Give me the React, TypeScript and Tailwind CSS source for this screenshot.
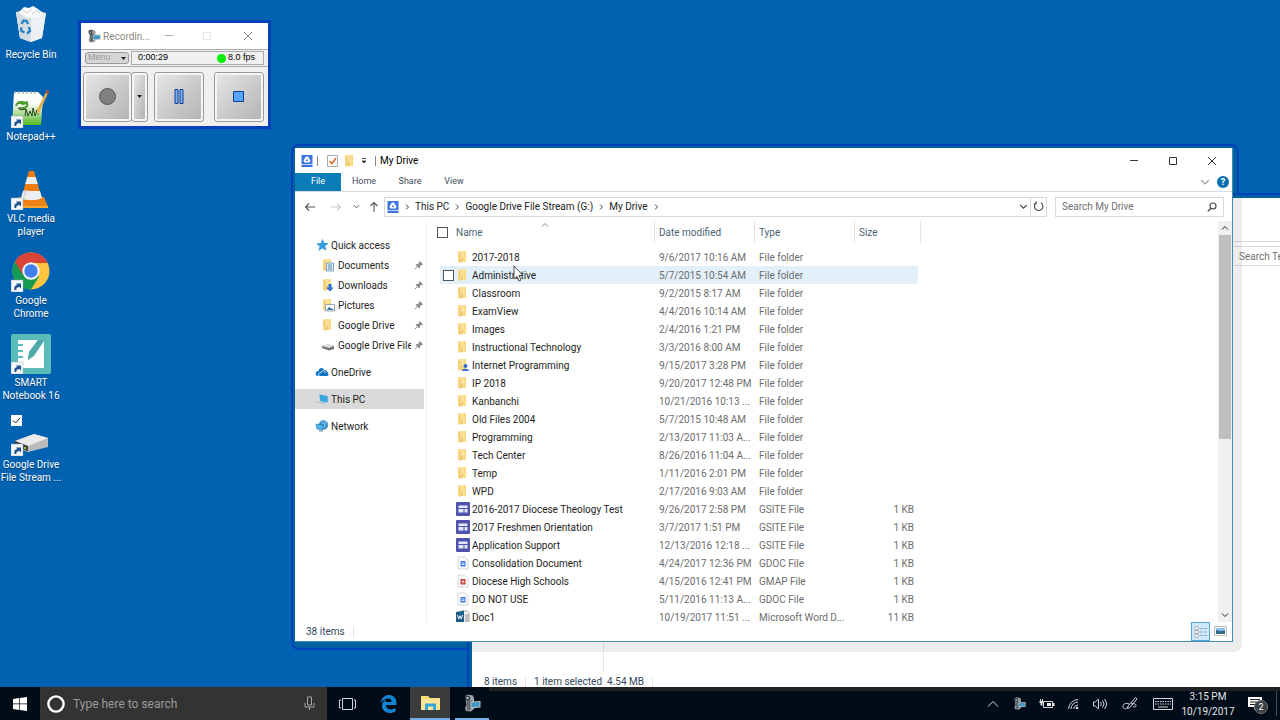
import type { ReactNode } from 'react'

type IconKind = 'folder' | 'shared' | 'site' | 'doc' | 'map' | 'word'

interface FileRow {
  name: string
  date: string
  type: string
  size?: string
  icon: IconKind
}

const FILES: FileRow[] = [
  { name: '2017-2018', date: '9/6/2017 10:16 AM', type: 'File folder', icon: 'folder' },
  { name: 'Administrative', date: '5/7/2015 10:54 AM', type: 'File folder', icon: 'folder' },
  { name: 'Classroom', date: '9/2/2015 8:17 AM', type: 'File folder', icon: 'folder' },
  { name: 'ExamView', date: '4/4/2016 10:14 AM', type: 'File folder', icon: 'folder' },
  { name: 'Images', date: '2/4/2016 1:21 PM', type: 'File folder', icon: 'folder' },
  { name: 'Instructional Technology', date: '3/3/2016 8:00 AM', type: 'File folder', icon: 'folder' },
  { name: 'Internet Programming', date: '9/15/2017 3:28 PM', type: 'File folder', icon: 'shared' },
  { name: 'IP 2018', date: '9/20/2017 12:48 PM', type: 'File folder', icon: 'folder' },
  { name: 'Kanbanchi', date: '10/21/2016 10:13 ...', type: 'File folder', icon: 'folder' },
  { name: 'Old Files 2004', date: '5/7/2015 10:48 AM', type: 'File folder', icon: 'folder' },
  { name: 'Programming', date: '2/13/2017 11:03 A...', type: 'File folder', icon: 'folder' },
  { name: 'Tech Center', date: '8/26/2016 11:04 A...', type: 'File folder', icon: 'folder' },
  { name: 'Temp', date: '1/11/2016 2:01 PM', type: 'File folder', icon: 'folder' },
  { name: 'WPD', date: '2/17/2016 9:03 AM', type: 'File folder', icon: 'folder' },
  { name: '2016-2017 Diocese Theology Test', date: '9/26/2017 2:58 PM', type: 'GSITE File', size: '1 KB', icon: 'site' },
  { name: '2017 Freshmen Orientation', date: '3/7/2017 1:51 PM', type: 'GSITE File', size: '1 KB', icon: 'site' },
  { name: 'Application Support', date: '12/13/2016 12:18 ...', type: 'GSITE File', size: '1 KB', icon: 'site' },
  { name: 'Consolidation Document', date: '4/24/2017 12:36 PM', type: 'GDOC File', size: '1 KB', icon: 'doc' },
  { name: 'Diocese High Schools', date: '4/15/2016 12:41 PM', type: 'GMAP File', size: '1 KB', icon: 'map' },
  { name: 'DO NOT USE', date: '5/11/2016 11:13 A...', type: 'GDOC File', size: '1 KB', icon: 'doc' },
  { name: 'Doc1', date: '10/19/2017 11:51 ...', type: 'Microsoft Word D...', size: '11 KB', icon: 'word' },
]

/* ---------- icons ---------- */

function Folder({ children }: { children?: ReactNode }) {
  return (
    <svg width="14" height="14" viewBox="0 0 14 14" className="shrink-0">
      <path d="M2 1h6l2 1v10H2z" fill="#fbe09a" />
      <path d="M2 2l3 1v10l-3-1z" fill="#f6d27c" />
      <path d="M5 8h2v4H5z" fill="#f0c777" />
      <path d="M8.500 1h1.500v11H8.500z" fill="#fdd878" />
      {children}
    </svg>
  )
}

function FileIcon({ kind }: { kind: IconKind }) {
  if (kind === 'folder') return <Folder />
  if (kind === 'shared')
    return (
      <Folder>
        <circle cx="9.500" cy="8" r="2" fill="#2f6fd0" />
        <path d="M6 13c0-3 7-3 7 0z" fill="#2f6fd0" />
      </Folder>
    )
  if (kind === 'site')
    return (
      <svg width="14" height="14" viewBox="0 0 14 14" className="shrink-0">
        <rect width="14" height="14" rx="1" fill="#4e54ae" />
        <path d="M2.500 3.500h9V6h-9zM2.500 7h5v3.500h-5zM8.500 7h3v3.500h-3z" fill="#e6e8fb" />
      </svg>
    )
  if (kind === 'word')
    return (
      <svg width="14" height="14" viewBox="0 0 14 14" className="shrink-0">
        <path d="M6 1h5l3 3v9H6z" fill="#f2f2f2" stroke="#8a8a8a" strokeWidth=".7" />
        <path d="M9 5h4M9 7h4M9 9h4M9 11h4" stroke="#777" strokeWidth=".8" />
        <path d="M0 2l8-1.500v13L0 12z" fill="#1f5f87" />
        <path d="M1.500 5l1.200 4L4 5.800 5.200 9l1.300-4" stroke="#fff" fill="none" strokeWidth=".9" />
      </svg>
    )
  const color = kind === 'doc' ? '#3d7ae0' : '#c8372d'
  return (
    <svg width="14" height="14" viewBox="0 0 14 14" className="shrink-0">
      <path d="M2 1h6.500L12 4v9H2z" fill="#fbfbfb" stroke="#c4c8cc" strokeWidth=".7" />
      <rect x="4.500" y="5" width="5" height="5.500" rx=".5" fill={color} />
      <path d={kind === 'doc' ? 'M5.500 7h3M5.500 8.500h3' : 'M7 6v3.500M5.500 7.700h3'} stroke="#fff" strokeWidth=".8" />
    </svg>
  )
}

function DriveIcon() {
  return (
    <svg width="12" height="12" viewBox="0 0 12 12" className="shrink-0">
      <rect x=".5" width="11" height="9" fill="#3b74e0" />
      <path d="M5 1.500h2l2.600 4.300-1 1.700H3.400l-1-1.700z" fill="#fff" />
      <path d="M6 3.800L7.200 5.900H4.800z" fill="#3b74e0" />
      <rect x=".5" y="9.700" width="11" height="2.300" fill="#3b74e0" />
    </svg>
  )
}

function Chevron({ dir = 'right', size = 8, color = '#444' }: { dir?: 'right' | 'down' | 'up'; size?: number; color?: string }) {
  const d = dir === 'right' ? 'M3 1.500L5.500 4 3 6.500' : dir === 'down' ? 'M1 2.500L4 5.500l3-3' : 'M1 5.500l3-3 3 3'
  return (
    <svg width={size} height={size} viewBox="0 0 8 8" className="shrink-0">
      <path d={d} fill="none" stroke={color} strokeWidth="1" />
    </svg>
  )
}

function Arrow({ dir, color }: { dir: 'left' | 'right' | 'up'; color: string }) {
  const d = {
    left: 'M11 6H1.500M5 2.500L1.500 6 5 9.500',
    right: 'M1 6h9.500M7 2.500l3.500 3.500L7 9.500',
    up: 'M6 11V1.500M2.500 5L6 1.500 9.500 5',
  }[dir]
  return (
    <svg width="12" height="12" viewBox="0 0 12 12">
      <path d={d} fill="none" stroke={color} strokeWidth="1.100" />
    </svg>
  )
}

function Pin() {
  return (
    <svg width="10" height="10" viewBox="0 0 10 10" className="shrink-0">
      <path d="M5.500 .8l3.700 3.700-1 .4-.6-.2-1.600 1.600v1.600l-.8.600L1.600 4.900l.7-.9h1.500l1.600-1.600-.2-.8z" fill="#8b8f94" />
      <path d="M3.500 6.500L.8 9.200" stroke="#8b8f94" />
    </svg>
  )
}

function Camera({ size = 18 }: { size?: number }) {
  return (
    <svg width={size} height={size} viewBox="0 0 18 18" className="shrink-0">
      <path d="M2 2l3-1.500 5 1 1 2.500v11l-3 2.500-5-.5-1-3 1.500-3z" fill="#9aa0a5" />
      <path d="M4 6.500h5V14l-3 2.500-2-.5z" fill="#60676d" />
      <circle cx="4.500" cy="4" r="2.600" fill="#303438" />
      <circle cx="4.500" cy="4" r="1.200" fill="#a9c3d8" />
      <path d="M7.500 7.500l10-.5v6.500l-10 1z" fill="#b4c0c8" />
      <path d="M8.500 8.500l8-.4v4.400l-8 .8z" fill="#3f97c6" />
    </svg>
  )
}

function ShortcutArrow() {
  return (
    <>
      <rect x="0" y="28" width="12" height="12" fill="#f4f7fb" stroke="#9ab" strokeWidth=".5" />
      <path d="M3.500 38c-.8-3 .5-4.800 2.700-5.100L5 31.500h5v5L8.500 35C6.500 35 5 36 5.300 38z" fill="#21528f" />
    </>
  )
}

function Art({ children }: { children: ReactNode }) {
  return (
    <svg width="40" height="40" viewBox="0 0 40 40">
      {children}
    </svg>
  )
}

const DESKTOP: { label: string; art: ReactNode; checked?: boolean }[] = [
  {
    label: 'Recycle Bin',
    art: (
      <Art>
        <path d="M5 6l4 26 11 4 11-4 4-25-15-4z" fill="#dce3e8" />
        <path d="M5 6l15 5 15-4-4 25-11 4-11-4z" fill="#eef1f3" />
        <path d="M5 6l15 5v25L9 32z" fill="#d3dce2" />
        <path d="M8 6l5-5 5 1 4-2 5 3 5 4-5 4-12 1z" fill="#fafafa" />
        <path d="M12 4l4 3 5-4M21 8l5-4 3 4" stroke="#c5ccd1" fill="none" />
        <path d="M10.500 18l2-3.500 3 .5 1.500 3" stroke="#2583c9" strokeWidth="2.400" fill="none" />
        <path d="M18 21l1 4-3 2.500" stroke="#2583c9" strokeWidth="2.400" fill="none" />
        <path d="M13.500 26.500l-3-1.500-.5-3.500" stroke="#2583c9" strokeWidth="2.400" fill="none" />
      </Art>
    ),
  },
  {
    label: 'Notepad++',
    art: (
      <Art>
        <defs>
          <linearGradient id="npp" x1="0" y1="0" x2="0" y2="1">
            <stop offset="0.350" stopColor="#fbfdf8" />
            <stop offset="1" stopColor="#52b821" />
          </linearGradient>
        </defs>
        <path d="M3 4h24l5 5-2 28H1z" fill="url(#npp)" />
        <path d="M4 3v3M8 3v3M12 3v3M16 3v3M20 3v3M24 3v3" stroke="#8f989e" />
        <path d="M5 18c1-5 8-5 11-2 2 3-4 5-8 4M7 14l5 2 5-2" stroke="#4f9c2e" strokeWidth="2" fill="none" />
        <path d="M7 20l3 2 5-1" stroke="#25401f" fill="none" />
        <path d="M14 28l1-7 2 7 2-5 2 5 1-8 2 8 2-6 1 5" stroke="#2a4a25" fill="none" />
        <path d="M36 2l2 1-9 20-3 4 0-5z" fill="#e2b04a" />
        <path d="M36 2l2 1-1 3-2-1z" fill="#b23a2a" />
        <ShortcutArrow />
      </Art>
    ),
  },
  {
    label: 'VLC media player',
    art: (
      <Art>
        <path d="M8 27h25l4 10H3z" fill="#ec8414" />
        <path d="M3 36h34v2H3z" fill="#f8a82e" />
        <path d="M18 1h5l8 28c-4 4-17 4-21 0z" fill="#f07c12" />
        <path d="M16.300 7h8.400l2 7H14.200zM12 21h17l2 7c-5 3-17 3-21 0z" fill="#eceff1" />
        <path d="M14 20l-3 9 2 1 4-10z" fill="#d5d8da" opacity=".8" />
        <ShortcutArrow />
      </Art>
    ),
  },
  {
    label: 'Google Chrome',
    art: (
      <Art>
        <circle cx="20" cy="19" r="18.500" fill="#fdc53f" />
        <path d="M20 19L4 9.700A18.500 18.500 0 0 0 20 37.500l8-13z" fill="#159b52" />
        <path d="M20 11h16.700A18.500 18.500 0 0 0 4 9.700L12 23z" fill="#da4437" />
        <circle cx="20" cy="19" r="8.700" fill="#f3f6fa" />
        <circle cx="20" cy="19" r="6.700" fill="#4280ee" />
        <ShortcutArrow />
      </Art>
    ),
  },
  {
    label: 'SMART Notebook 16',
    art: (
      <Art>
        <rect width="40" height="40" rx="2" fill="#59bcba" />
        <path d="M7 6h20l-9 12-1 8 6-4L33 7v27H7z" fill="#fff" />
        <path d="M6 11h6M6 17h6M6 23h6" stroke="#59bcba" strokeWidth="2" />
        <path d="M27 6h6L22 22l-5 4 1-8z" fill="#4fa9a8" />
        <ShortcutArrow />
      </Art>
    ),
  },
  {
    label: 'Google Drive File Stream ...',
    checked: true,
    art: (
      <Art>
        <path d="M4 25l19-7 14 4v9l-20 5L4 31z" fill="#b9bbbd" />
        <path d="M4 25l19-7 14 4-20 8z" fill="#ececec" />
        <path d="M4 25l13 5v5L4 31z" fill="#3b3d3f" />
        <path d="M13 31h2v2h-2z" fill="#9acb3b" />
        <ShortcutArrow />
      </Art>
    ),
  },
]

function DesktopIcons() {
  return (
    <div className="absolute top-1.5 left-0 flex w-[62px] flex-col leading-[13px] text-white">
      {DESKTOP.map((item) => (
        <button key={item.label} className="relative flex h-[82px] flex-col items-center gap-0.5">
          {item.checked && (
            <svg width="11" height="11" viewBox="0 0 11 11" className="absolute -top-px left-[11px]">
              <rect width="11" height="11" fill="#fff" />
              <path d="M2 5.500L4.500 8 9 3" fill="none" stroke="#222" />
            </svg>
          )}
          {item.art}
          <span className="[text-shadow:0_1px_1px_#003a70]">{item.label}</span>
        </button>
      ))}
    </div>
  )
}

/* ---------- recorder ---------- */

function Recorder() {
  const key = 'flex h-12 items-center justify-center rounded-[3px] border-2 border-[#f5f5f5] bg-linear-to-br from-[#e6e6e6] to-[#b4b4b4] shadow-[0_0_0_1px_#999]'
  return (
    <section className="absolute top-[23px] left-[81px] flex w-[187px] flex-col bg-[#f0f0f0] shadow-[0_0_0_3px_#0040b8]">
      <header className="flex h-[26px] items-center bg-white pl-1.5 text-[#8d8d80]">
        <Camera size={14} />
        <span className="ml-0.5 w-[50px]">Recordin...</span>
        <button aria-label="Minimize" className="flex w-8 justify-center">
          <svg width="10" height="10"><path d="M1 4.500h8" stroke="#aaa" /></svg>
        </button>
        <button aria-label="Maximize" className="flex flex-1 justify-center">
          <svg width="10" height="10"><path d="M1.500 1.500h7v7h-7z" stroke="#e4e4e4" fill="none" /></svg>
        </button>
        <button aria-label="Close" className="flex w-10 justify-center">
          <svg width="10" height="10"><path d="M1 1l8 8M9 1L1 9" stroke="#888" /></svg>
        </button>
      </header>
      <div className="flex h-[18px] items-center gap-0.5 border-y border-[#aaa] px-1 font-['Liberation_Sans',sans-serif] text-[9px] text-black">
        <button className="flex h-3 w-11 items-center justify-between rounded-[3px] border border-[#999] bg-[#d6d6d6] px-0.5 text-[#999]">
          Menu
          <svg width="5" height="3"><path d="M0 0h5L2.500 3z" fill="#222" /></svg>
        </button>
        <div className="flex h-[14px] flex-1 items-center justify-between border border-[#aaa] pr-2 pl-1.5">
          <span>0:00:29</span>
          <span className="flex items-center gap-0.5">
            <i className="size-[9px] rounded-full bg-[#00f000]" />
            8.0 fps
          </span>
        </div>
      </div>
      <div className="flex h-[59px] items-center pl-[3px]">
        <button aria-label="Record" className={`${key} w-[47px]`}>
          <i className="size-[17px] rounded-full border border-[#555] bg-[#808080]" />
        </button>
        <button aria-label="Record options" className={`${key} ml-px w-[15px]`}>
          <svg width="5" height="3"><path d="M0 0h5L2.500 3z" fill="#222" /></svg>
        </button>
        <button aria-label="Pause" className={`${key} ml-2 w-12`}>
          <svg width="10" height="15"><path d="M1 .5h3v14H1zM6 .5h3v14H6z" fill="#72b2ff" stroke="#143c96" /></svg>
        </button>
        <button aria-label="Stop" className={`${key} ml-3 w-12`}>
          <svg width="12" height="12"><path d="M.5 .5h10v10H.5z" fill="#55a6ff" stroke="#143c96" /></svg>
        </button>
      </div>
    </section>
  )
}

/* ---------- explorer ---------- */

function TitleBar() {
  return (
    <header className="flex h-[25px] items-center pr-px pl-1.5 text-black">
      <DriveIcon />
      <i className="ml-1 h-2.5 w-px bg-[#888]" />
      <svg width="11" height="12" viewBox="0 0 11 12" className="ml-[9px]">
        <path d="M.5 .5h10v11H.5z" fill="#fff" stroke="#aaa" />
        <path d="M2.500 6L5 8.500 9 3" fill="none" stroke="#d9652b" strokeWidth="1.500" />
      </svg>
      <span className="ml-[5px]"><Folder /></span>
      <svg width="6" height="6" viewBox="0 0 6 6" className="ml-1"><path d="M1 .5h4M1 3h4L3 5z" stroke="#333" strokeWidth=".8" fill="#333" /></svg>
      <i className="ml-2 h-2.5 w-px bg-[#888]" />
      <h1 className="ml-1">My Drive</h1>
      <div className="ml-auto flex">
        <button aria-label="Minimize" className="flex w-[39px] justify-center"><svg width="10" height="10"><path d="M1 4.500h8" stroke="#333" /></svg></button>
        <button aria-label="Maximize" className="flex w-[39px] justify-center"><svg width="10" height="10"><path d="M1.500 1.500h7v7h-7z" fill="none" stroke="#333" /></svg></button>
        <button aria-label="Close" className="flex w-[39px] justify-center"><svg width="10" height="10"><path d="M1 1l8 8M9 1L1 9" stroke="#333" /></svg></button>
      </div>
    </header>
  )
}

function Ribbon() {
  return (
    <nav className="flex h-[19px] items-stretch border-b border-[#dadbdc] text-[9px] text-[#444b5c]">
      <button className="w-[46px] bg-[#0a7cb8] text-white">File</button>
      <button className="w-[46px]">Home</button>
      <button className="w-[46px]">Share</button>
      <button className="w-[42px]">View</button>
      <div className="ml-auto flex items-center gap-[7px] pr-[3px]">
        <Chevron dir="down" size={10} color="#999" />
        <button aria-label="Help" className="size-3 rounded-full bg-[#0a6fb0] text-[9px] leading-3 font-bold text-white">?</button>
      </div>
    </nav>
  )
}

function AddressRow() {
  return (
    <div className="flex h-[29px] items-center pr-2 pl-0.5">
      <button aria-label="Back" className="flex w-[26px] justify-center"><Arrow dir="left" color="#555" /></button>
      <button aria-label="Forward" className="flex w-[26px] justify-center"><Arrow dir="right" color="#ccc" /></button>
      <button aria-label="Recent locations" className="flex w-[14px] justify-center"><Chevron dir="down" size={7} /></button>
      <button aria-label="Up" className="flex w-[21px] justify-center"><Arrow dir="up" color="#555" /></button>
      <div className="flex h-5 flex-1 items-stretch border border-[#d9d9d9]">
        <div className="flex flex-1 items-center gap-1 pl-0.5 text-[#222]">
          <DriveIcon />
          <Chevron />
          <a href="#pc">This PC</a>
          <Chevron />
          <a href="#stream">Google Drive File Stream (G:)</a>
          <Chevron />
          <a href="#drive">My Drive</a>
          <Chevron />
        </div>
        <button aria-label="Previous locations" className="flex w-[14px] items-center justify-center"><Chevron dir="down" size={9} /></button>
        <button aria-label="Refresh" className="flex w-4 items-center justify-center border-l border-[#d9d9d9]">
          <svg width="11" height="11" viewBox="0 0 11 11"><path d="M8 1.800A4.200 4.200 0 1 1 3 2.100M3.200 .3v2.400H.8" fill="none" stroke="#444" strokeWidth="1.100" /></svg>
        </button>
      </div>
      <label className="ml-2 flex h-5 w-[169px] items-center border border-[#d9d9d9] px-1.5">
        <input aria-label="Search My Drive" placeholder="Search My Drive" className="min-w-0 flex-1 outline-none placeholder:text-[#707070]" />
        <svg width="10" height="10" viewBox="0 0 10 10"><circle cx="6" cy="4" r="3" fill="none" stroke="#444" strokeWidth="1.100" /><path d="M4 6.200L.8 9.400" stroke="#444" strokeWidth="1.300" /></svg>
      </label>
    </div>
  )
}

const PINNED: { label: string; icon: ReactNode }[] = [
  { label: 'Documents', icon: <Folder><path d="M5.500 5h7v8h-7z" fill="#e5f1fa" stroke="#5d8fb3" strokeWidth=".8" /><path d="M7 7h4M7 9h4M7 11h4" stroke="#4889b8" /></Folder> },
  { label: 'Downloads', icon: <Folder><path d="M7.500 6h3v3.500h2.300L9 13.500 5.200 9.500h2.300z" fill="#2673d3" /></Folder> },
  { label: 'Pictures', icon: <Folder><path d="M4.500 6.500h9v6.500h-9z" fill="#fff" stroke="#7f96a8" strokeWidth=".8" /><path d="M5.500 12l2.500-3 4.500 2.500v.5z" fill="#3d79a8" /></Folder> },
  { label: 'Google Drive', icon: <Folder /> },
  {
    label: 'Google Drive File Stream (G:)',
    icon: (
      <svg width="14" height="14" viewBox="0 0 14 14" className="shrink-0">
        <path d="M1 8l6-1.500 6 1.500v3l-5 1.500-7-2.500z" fill="#6f7275" />
        <path d="M1 8l6-1.500 6 1.500-5 2z" fill="#dedede" />
      </svg>
    ),
  },
]

function NavPane() {
  const top = 'flex h-5 items-center gap-0.5 pl-5 text-left'
  return (
    <aside className="flex w-[132px] shrink-0 flex-col gap-[7px] border-r border-[#eee] pt-3.5 pr-0.5 text-[#1e1e1e]">
      <div>
        <button className={top}>
          <svg width="14" height="14" viewBox="0 0 14 14"><path d="M7.500 1.500l1.500 3.800 4 .2-3.200 2.600 1 4-3.400-2.200-3.400 2.300 1-4L2 5.800l4-.3z" fill="#2fa0e4" stroke="#1b7fc4" strokeWidth=".6" /></svg>
          Quick access
        </button>
        {PINNED.map((p) => (
          <button key={p.label} className="flex h-5 w-full items-center gap-[3px] pl-[26px] text-left">
            {p.icon}
            <span className="flex-1 overflow-hidden whitespace-nowrap">{p.label}</span>
            <Pin />
          </button>
        ))}
      </div>
      <button className={top}>
        <svg width="14" height="14" viewBox="0 0 14 14"><path d="M1 10c-1-3 1-4 2.500-4C4 2.500 8 2 9 5c2.500-.5 3 1 3 2 2 .5 2 4 0 4H2.500z" fill="#1275c4" /><path d="M4 11c-1-2 0-3.500 2-3.500C7 5 10 5.500 10.300 7.700" fill="none" stroke="#fff" strokeWidth=".8" /></svg>
        OneDrive
      </button>
      <button className={`${top} bg-[#d9d9d9]`}>
        <svg width="14" height="14" viewBox="0 0 14 14"><path d="M4 2l9 2v7L5 9.500z" fill="#38a4e0" stroke="#c5d9e6" strokeWidth=".7" /><path d="M1 11l4-1 5 2" stroke="#b5bcc2" fill="none" /></svg>
        This PC
      </button>
      <button className={top}>
        <svg width="14" height="14" viewBox="0 0 14 14"><circle cx="8.500" cy="6" r="4.700" fill="#358dca" /><path d="M6 3l4 2-1 4M9 1.500l3 4" stroke="#9ad0f0" fill="none" /><path d="M1 5l7 1v5l-6-1z" fill="#4bb5e8" stroke="#1c6ea6" strokeWidth=".6" /><path d="M4 12h4" stroke="#6b8ba0" /></svg>
        Network
      </button>
    </aside>
  )
}

function FileTable() {
  const box = 'size-[11px] shrink-0 appearance-none border border-[#555] bg-white checked:bg-[#0a7cb8]'
  const th = 'pb-[5px] text-left font-normal align-top'
  const head = 'flex h-[22px] items-center border-r border-[#e2e2e2] pl-1'
  return (
    <table className="ml-[9px] w-[485px] table-fixed border-collapse text-[#6d6d6d]">
      <colgroup>
        <col className="w-[219px]" />
        <col className="w-[100px]" />
        <col className="w-[100px]" />
        <col className="w-[66px]" />
      </colgroup>
      <thead className="text-[#4c6372]">
        <tr>
          <th className={th}>
            <div className="relative flex h-[22px] items-center gap-2 border-r border-[#e2e2e2] pl-px">
              <input type="checkbox" aria-label="Select all" className={box} />
              Name
              <span className="absolute top-0 left-[105px] flex"><Chevron dir="up" color="#888" /></span>
            </div>
          </th>
          <th className={th}><div className={head}>Date modified</div></th>
          <th className={th}><div className={head}>Type</div></th>
          <th className={th}><div className={head}>Size</div></th>
        </tr>
      </thead>
      <tbody>
        {FILES.map((f, i) => {
          const bg = i === 1 ? 'bg-[#e3f0fa]' : ''
          return (
            <tr key={f.name}>
              <td className="p-0 pl-1">
                <div className={`flex h-[18px] items-center gap-0.5 pl-[3px] text-[#1e1e1e] ${bg}`}>
                  <input type="checkbox" aria-label={`Select ${f.name}`} className={`${box} ${i === 1 ? '' : 'opacity-0'}`} />
                  <FileIcon kind={f.icon} />
                  <span className="whitespace-nowrap">{f.name}</span>
                </div>
              </td>
              <td className="p-0"><div className={`flex h-[18px] items-center pl-1 whitespace-nowrap ${bg}`}>{f.date}</div></td>
              <td className="p-0"><div className={`flex h-[18px] items-center pl-1 whitespace-nowrap ${bg}`}>{f.type}</div></td>
              <td className="p-0 pr-[3px]"><div className={`flex h-[18px] items-center justify-end pr-1 ${bg}`}>{f.size}</div></td>
            </tr>
          )
        })}
      </tbody>
    </table>
  )
}

function Explorer() {
  return (
    <main className="absolute top-[148px] right-[47px] bottom-[78px] left-[295px] flex flex-col border-r border-b border-[#3f8db8] bg-white">
      <TitleBar />
      <Ribbon />
      <AddressRow />
      <div className="flex min-h-0 flex-1">
        <NavPane />
        <div className="min-w-0 flex-1 overflow-hidden">
          <FileTable />
        </div>
        <div className="flex w-[14px] flex-col items-center bg-[#f0f0f0]">
          <button aria-label="Scroll up" className="flex h-3.5 items-center"><Chevron dir="up" color="#222" /></button>
          <i className="h-[204px] w-3 bg-[#bfbfbf]" />
          <button aria-label="Scroll down" className="mt-auto flex h-3.5 items-center"><Chevron dir="down" color="#222" /></button>
        </div>
      </div>
      <footer className="flex h-[19px] items-center pl-[11px] text-[#33475b]">
        <span className="border-r border-[#e5e5e5] pr-2 leading-3">38 items</span>
        <button aria-label="Details view" className="ml-auto flex h-[19px] w-[19px] items-center justify-center border border-[#5aa5d8] bg-[#cce8ff]">
          <svg width="13" height="12" viewBox="0 0 13 12"><path d="M1 .5h3v3H1zM1 4.500h3v3H1zM1 8.500h3v3H1z" fill="#fff" stroke="#999" strokeWidth=".7" /><path d="M5.500 2.500H9M5.500 6H9M5.500 9.500H9M10 2.500h3M10 6h3M10 9.500h3" stroke="#8a98a5" strokeWidth=".8" /></svg>
        </button>
        <button aria-label="Thumbnail view" className="mr-[5px] ml-1">
          <svg width="13" height="11" viewBox="0 0 13 11"><path d="M.5 .5h12v9H.5z" fill="#fff" stroke="#bbb" /><path d="M2 2h9v3H2z" fill="#8fc3ee" /><path d="M2 4l4 1 5-.5V8H2z" fill="#2f6a86" /></svg>
        </button>
      </footer>
    </main>
  )
}

/* second explorer window, mostly hidden behind the first */
function BackWindow() {
  return (
    <section className="absolute top-[198px] right-0 bottom-[33px] left-[472px] flex flex-col overflow-hidden bg-white">
      <div className="h-[44px] border-b border-[#dadbdc]" />
      <div className="mt-1 flex h-5 justify-end">
        <input aria-label="Search Temp" placeholder="Search Te" className="w-[46px] border-y border-[#d9d9d9] pl-[5px] outline-none placeholder:text-[#707070]" />
      </div>
      <div className="w-[132px] flex-1 border-r border-[#e8e8e8]" />
      <footer className="mt-1 flex h-2.5 items-center pl-3 leading-[10px] text-[#33475b]">
        <span className="border-r border-[#e5e5e5] pr-2">8 items</span>
        <span className="border-r border-[#e5e5e5] pr-2 pl-2">1 item selected&nbsp; 4.54 MB</span>
      </footer>
      <div className="pointer-events-none absolute top-0 right-[38px] bottom-[35px] left-0 rounded-br-[8px] bg-black/7" />
    </section>
  )
}

/* ---------- taskbar ---------- */

function Taskbar() {
  const line = { fill: 'none', stroke: '#d5d8da' }
  return (
    <footer className="absolute inset-x-0 bottom-0 flex h-[33px] items-stretch bg-[#000c17] text-[#e4e6e8]">
      <button aria-label="Start" className="flex w-10 items-center justify-center">
        <svg width="14" height="14" viewBox="0 0 14 14"><path d="M0 2l6-.9v5.500H0zM6.700 1L14 0v6.600H6.700zM0 7.300h6v5.600L0 12zM6.700 7.300H14V14l-7.300-1z" fill="#fff" /></svg>
      </button>
      <label className="flex w-[287px] items-center bg-[#333] pr-3 pl-[7px]">
        <svg width="18" height="18" viewBox="0 0 18 18"><circle cx="9" cy="9" r="7.600" fill="none" stroke="#fff" strokeWidth="2.400" /></svg>
        <input aria-label="Type here to search" placeholder="Type here to search" className="ml-2 min-w-0 flex-1 text-[12px] outline-none placeholder:text-[#9a9a9a]" />
        <svg width="11" height="15" viewBox="0 0 11 15"><path d="M3.500 1h4v8h-4zM1 7v4h9V7M5.500 11v3" fill="none" stroke="#a5a5a5" /></svg>
      </label>
      <button aria-label="Task View" className="flex w-[40px] items-center justify-center">
        <svg width="17" height="14" viewBox="0 0 17 14"><path d="M3.500 1.500h10v11h-10zM2 3H.5v8H2M15 3h1.500v8H15" {...line} /></svg>
      </button>
      <button aria-label="Edge" className="flex w-[43px] items-center justify-center">
        <svg width="17" height="18" viewBox="0 0 17 18"><path d="M.5 8C1.500 2.500 5 0 9 0c5 0 7.500 4 7.500 8v2H5.800c.2 5 6 5.300 9.700 3v3.500C9 20 1.500 17 2 10.500 2.200 7.500 4 5.500 6.500 4.500 5.800 5.300 5.600 6 5.600 7h6c0-2-.8-3.500-3.200-3.500C5.500 3.500 2.500 5 .5 8z" fill="#1583d4" /></svg>
      </button>
      <button aria-label="File Explorer" className="flex w-10 items-center justify-center border-b-2 border-[#76b0ea] bg-[#3a3c3e]">
        <svg width="19" height="16" viewBox="0 0 19 16"><path d="M0 1h7l2 2h10v12H0z" fill="#f9d978" /><path d="M0 4h19v11H0z" fill="#fde597" /><path d="M4 15V8.500h11V15h-3v-3.500H7V15z" fill="#37a8dc" /></svg>
      </button>
      <button aria-label="Recorder" className="ml-[5px] flex w-[34px] items-center justify-center border-b-2 border-[#76b0ea]"><Camera size={18} /></button>
      <div className="flex flex-1 items-center justify-end border-t-4 border-[#202224] pb-1">
        <button aria-label="Show hidden icons" className="flex w-[26px] justify-center"><svg width="12" height="8"><path d="M1 6.500l5-5 5 5" {...line} /></svg></button>
        <span className="flex w-[27px] justify-center"><Camera size={13} /></span>
        <svg width="27" height="14" viewBox="0 0 27 14"><path d="M10.500 4.500h9v6h-9z" {...line} /><path d="M20 6h1.500v3H20zM14 6h4v3h-4z" fill="#eee" /><path d="M7.500 2v2M9.500 2v2" {...line} /><path d="M6.500 4h4v2h-1v2.500h-2V6h-1z" fill="#ddd" /></svg>
        <svg width="27" height="14" viewBox="0 0 27 14"><path d="M8.500 12A10 10 0 0 1 18 2.500M11 12a7 7 0 0 1 7-7M13.500 12A5 5 0 0 1 18 8" {...line} /><circle cx="17" cy="11" r="1.300" fill="#ddd" /></svg>
        <svg width="27" height="14" viewBox="0 0 27 14"><path d="M6.500 5h2l3-3v10l-3-3h-2zM13.500 5q1.500 2 0 4M15.500 3.500q3 3.500 0 7M17.500 2q4 5 0 10" {...line} /></svg>
        <svg width="31" height="16" viewBox="0 0 31 16"><path d="M21.500 1.500l1.500 1.500-7 8.500-2.500 1 .5-2.500z" {...line} /><path d="M15 8c-3-1.500-6 0-6 2.500s3 3 4 1M17 8c3-1 5 0 5 1.500s-2 2-3 1" {...line} /></svg>
        <svg width="36" height="14" viewBox="0 0 36 14"><path d="M8.500 1.500h19v11h-19z" {...line} /><path d="M10 4.500h16M10 7h16" {...line} strokeDasharray="1.500 1" /><path d="M13 10h10" {...line} /></svg>
        <div className="flex w-[54px] flex-col items-center leading-[15px] whitespace-nowrap">
          <time>3:15 PM</time>
          <time>10/19/2017</time>
        </div>
        <button aria-label="Notifications" className="flex w-[41px] justify-center">
          <span className="relative">
            <svg width="15" height="15" viewBox="0 0 15 15"><path d="M0 1h14v10H9l-3 3v-3H0z" fill="#fff" /><path d="M2 3.500h10M2 6h10M2 8.500h7" stroke="#222" /></svg>
            <b className="absolute top-1 left-1.5 size-3.5 rounded-full border border-[#777] bg-[#3c4043] text-center text-[9px] leading-3 font-normal text-white">2</b>
          </span>
        </button>
        <i className="mr-[3px] h-full w-px bg-[#4a4d50]" />
      </div>
    </footer>
  )
}

export default function App() {
  return (
    <div className="relative h-screen overflow-hidden bg-[#0062b1] font-[Roboto,'Open_Sans',sans-serif] text-[10px]">
      <DesktopIcons />
      <Recorder />
      {/* glow outlines under both explorer windows */}
      <div className="absolute top-[144px] right-[41px] bottom-[70px] left-[291px] rounded-[8px] border-2 border-[#0040b8] bg-[#00619c]" />
      <div className="absolute top-[193px] -right-2 bottom-0 left-[467px] rounded-[8px] border-2 border-[#0040b8] bg-[#00619c]" />
      <BackWindow />
      <Explorer />
      <Taskbar />
      <svg width="12" height="18" viewBox="0 0 12 18" className="absolute top-[265px] left-[513px]">
        <path d="M1 1v13l3-2.500L6 16l2-1-2-4.500h4z" fill="#fff" stroke="#222" strokeWidth=".8" />
      </svg>
    </div>
  )
}
